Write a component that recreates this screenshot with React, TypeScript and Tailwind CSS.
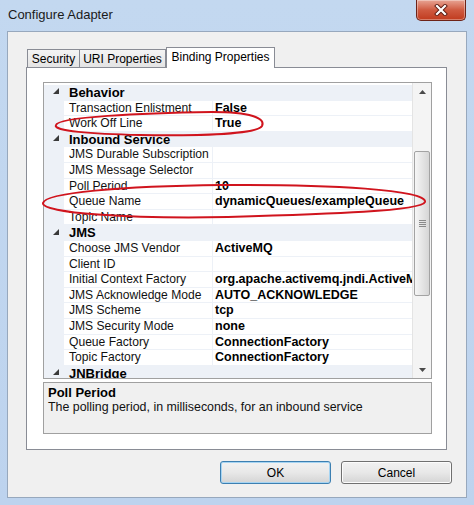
import React from "react";

type Row =
  | { kind: "cat"; label: string }
  | { kind: "prop"; name: string; value?: string };

const rows: Row[] = [
  { kind: "cat", label: "Behavior" },
  { kind: "prop", name: "Transaction Enlistment", value: "False" },
  { kind: "prop", name: "Work Off Line", value: "True" },
  { kind: "cat", label: "Inbound Service" },
  { kind: "prop", name: "JMS Durable Subscription" },
  { kind: "prop", name: "JMS Message Selector" },
  { kind: "prop", name: "Poll Period", value: "10" },
  { kind: "prop", name: "Queue Name", value: "dynamicQueues/exampleQueue" },
  { kind: "prop", name: "Topic Name" },
  { kind: "cat", label: "JMS" },
  { kind: "prop", name: "Choose JMS Vendor", value: "ActiveMQ" },
  { kind: "prop", name: "Client ID" },
  {
    kind: "prop",
    name: "Initial Context Factory",
    value: "org.apache.activemq.jndi.ActiveMQInitialContextFactory",
  },
  { kind: "prop", name: "JMS Acknowledge Mode", value: "AUTO_ACKNOWLEDGE" },
  { kind: "prop", name: "JMS Scheme", value: "tcp" },
  { kind: "prop", name: "JMS Security Mode", value: "none" },
  { kind: "prop", name: "Queue Factory", value: "ConnectionFactory" },
  { kind: "prop", name: "Topic Factory", value: "ConnectionFactory" },
  { kind: "cat", label: "JNBridge" },
];

function Expander() {
  return (
    <svg width="6" height="6" viewBox="0 0 6 6" className="shrink-0">
      <polygon points="6,0 6,6 0,6" fill="#3a3a3a" />
    </svg>
  );
}

function GridRow({ row }: { row: Row }) {
  if (row.kind === "cat") {
    return (
      <div className="flex h-[15.6px] shrink-0 items-center bg-[#edf1f7]">
        <div className="ml-[9px] mb-[3px]">
          <Expander />
        </div>
        <span className="ml-[10px] text-[13px] leading-[15.6px] font-bold text-black">
          {row.label}
        </span>
      </div>
    );
  }
  return (
    <div className="flex h-[15.6px] shrink-0">
      <div className="w-[20px] shrink-0 bg-[#edf1f7]" />
      <div className="w-[148px] shrink-0 overflow-hidden whitespace-nowrap border-b border-[#edf1f7] pl-[5px] text-[12.1px] leading-[15px] text-[#111]">
        {row.name}
      </div>
      <div className="w-px shrink-0 bg-[#edf1f7]" />
      <div className="min-w-0 flex-1 overflow-hidden whitespace-nowrap border-b border-[#edf1f7] pl-[2px] text-[12.5px] leading-[15px] font-bold text-black">
        {row.value}
      </div>
    </div>
  );
}

function ScrollArrow({ up }: { up: boolean }) {
  return (
    <div className="flex h-[17px] shrink-0 items-center justify-center">
      <svg width="7" height="4" viewBox="0 0 7 4">
        <polygon points={up ? "0,4 3.5,0 7,4" : "0,0 3.5,4 7,0"} fill="#4a4a4a" />
      </svg>
    </div>
  );
}

function Scrollbar() {
  return (
    <div className="flex w-[19px] shrink-0 flex-col border-l border-[#e4e4e4] bg-[#f4f4f4]">
      <ScrollArrow up />
      <div className="h-[51px] shrink-0" />
      <div className="mx-[1px] flex h-[145px] shrink-0 items-center justify-center rounded-[2px] border border-[#a3a3a3] bg-gradient-to-r from-[#f6f6f6] to-[#d6d6d6]">
        <div className="flex flex-col gap-[1px]">
          <div className="h-px w-[7px] bg-[#8a8a8a]" />
          <div className="h-px w-[7px] bg-[#8a8a8a]" />
          <div className="h-px w-[7px] bg-[#8a8a8a]" />
          <div className="h-px w-[7px] bg-[#8a8a8a]" />
        </div>
      </div>
      <div className="flex-1" />
      <ScrollArrow up={false} />
    </div>
  );
}

function Tab({ label, selected, className }: { label: string; selected?: boolean; className: string }) {
  if (selected) {
    return (
      <div
        className={`relative z-10 -mb-px flex h-[21px] items-center justify-center border border-b-0 border-[#898c95] bg-white pb-[2px] text-[12px] text-black ${className}`}
      >
        {label}
      </div>
    );
  }
  return (
    <div
      className={`flex h-[18px] items-center justify-center border border-b-0 border-[#898c95] bg-gradient-to-b from-[#f4f4f4] to-[#e4e4e4] pt-[1px] text-[12px] text-black ${className}`}
    >
      {label}
    </div>
  );
}

function CloseButton() {
  return (
    <div className="mr-[8px] flex h-[21px] w-[50px] items-center justify-center rounded-b-[5px] border border-t-0 border-[#6d2318] bg-gradient-to-b from-[#e7a494] via-[#cf5a40] to-[#c03a1c] shadow-[inset_0_0_0_1px_rgba(255,255,255,0.35)]">
      <svg width="14" height="12" viewBox="0 0 14 12">
        <path d="M3 2 L11 10 M11 2 L3 10" stroke="#5a1a10" strokeWidth="4" strokeLinecap="square" />
        <path d="M3 2 L11 10 M11 2 L3 10" stroke="#ffffff" strokeWidth="2.2" strokeLinecap="square" />
      </svg>
    </div>
  );
}

function Ellipses() {
  return (
    <svg
      className="pointer-events-none absolute left-0 top-0 z-20"
      width="474"
      height="505"
      viewBox="0 0 474 505"
    >
      <path
        d="M56 125 C58 117, 140 113, 212 112 C250 112, 266 118, 262 126 C257 134, 200 136, 140 135 C92 134, 52 131, 56 125 Z"
        fill="none"
        stroke="#d0141d"
        strokeWidth="2"
      />
      <path
        d="M43 203 C45 193, 120 186, 222 185 C330 184, 428 190, 425 202 C422 211, 330 214, 228 217 C130 219, 41 213, 43 203 Z"
        fill="none"
        stroke="#d0141d"
        strokeWidth="2"
      />
    </svg>
  );
}

export default function App() {
  return (
    <div className="relative h-[505px] w-[474px] overflow-hidden bg-gradient-to-b from-[#c3d8f0] to-[#bdd3ee] font-['Liberation_Sans',Arial,sans-serif]">
      <div className="flex h-[31px] items-start justify-between">
        <div className="pl-[8px] pt-[7px] text-[13px] leading-[16px] text-[#1a1a1a]">
          Configure Adapter
        </div>
        <CloseButton />
      </div>

      <div className="ml-[7px] flex h-[467px] w-[460px] flex-col border border-[#97a8bd] bg-[#f0f0f0] pl-[18px] pt-[15px]">
        <div className="ml-[1px] flex h-[20px] items-end">
          <Tab label="Security" className="w-[53px]" />
          <Tab label="URI Properties" className="w-[86px] border-l-0" />
          <Tab label="Binding Properties" selected className="w-[109px]" />
        </div>

        <div className="flex h-[383px] w-[421px] flex-col border border-[#898c95] bg-white pl-[16px] pt-[14px]">
          <div className="flex h-[297px] w-[389px] border border-[#a0a0a0] bg-white">
            <div className="flex min-w-0 flex-1 flex-col overflow-hidden pt-[2px]">
              {rows.map((row, i) => (
                <GridRow key={i} row={row} />
              ))}
            </div>
            <Scrollbar />
          </div>

          <div className="mt-[3px] h-[52px] w-[389px] border border-[#a0a0a0] bg-[#f0f0f0] pl-[4px] pt-[3px]">
            <div className="text-[13px] leading-[14px] font-bold text-black">Poll Period</div>
            <div className="text-[12.4px] leading-[14px] text-[#111]">
              The polling period, in milliseconds, for an inbound service
            </div>
          </div>
        </div>

        <div className="mt-[11px] flex justify-end gap-[10px] pr-[14px]">
          <button className="flex h-[23px] w-[111px] items-center justify-center rounded-[3px] border border-[#3c7fb1] bg-gradient-to-b from-[#f2f2f2] via-[#e8e8e8] to-[#d4d4d4] text-[12px] text-black shadow-[inset_0_0_0_1px_#a6d4f2]">
            OK
          </button>
          <button className="flex h-[23px] w-[111px] items-center justify-center rounded-[3px] border border-[#707070] bg-gradient-to-b from-[#f2f2f2] via-[#e8e8e8] to-[#d4d4d4] text-[12px] text-black shadow-[inset_0_0_0_1px_#fcfcfc]">
            Cancel
          </button>
        </div>
      </div>

      <Ellipses />
    </div>
  );
}
